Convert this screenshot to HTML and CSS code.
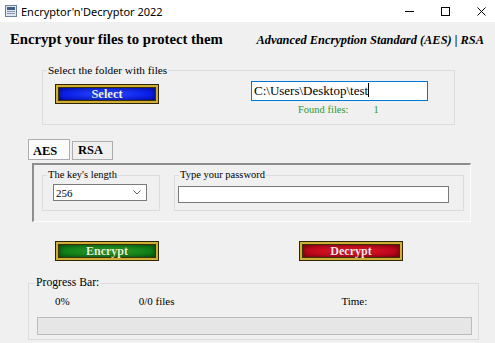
FILE: index.html
```html
<!DOCTYPE html>
<html lang="en">
<head>
    <meta charset="UTF-8">
    <title>Encryptor'n'Decryptor 2022</title>
    <link rel="stylesheet" href="styles.css">
</head>
<body>
<div class="titlebar">
    <svg class="app-icon" width="12" height="12" viewBox="0 0 12 12">
        <rect x="0.5" y="0.5" width="11" height="11" fill="#dfe6ee" stroke="#6b7f96"/>
        <rect x="2" y="2" width="8" height="3" fill="#3d5f8a"/>
        <rect x="2" y="6" width="8" height="1" fill="#8a9bb0"/>
        <rect x="2" y="8" width="8" height="1" fill="#8a9bb0"/>
    </svg>
    <span class="title">Encryptor'n'Decryptor 2022</span>
    <div class="controls">
        <span class="ctl">
            <svg width="9" height="9" viewBox="0 0 9 9"><path d="M0 4.5h9" stroke="#000" stroke-width="1"/></svg>
        </span>
        <span class="ctl">
            <svg width="9" height="9" viewBox="0 0 9 9"><rect x="0.5" y="0.5" width="8" height="8" fill="none" stroke="#000"/></svg>
        </span>
        <span class="ctl">
            <svg width="9" height="9" viewBox="0 0 9 9"><path d="M0.5 0.5l8 8M8.5 0.5l-8 8" stroke="#000" stroke-width="1"/></svg>
        </span>
    </div>
</div>

<div class="content">
    <div class="header">
        <h1>Encrypt your files to protect them</h1>
        <span class="subtitle">Advanced Encryption Standard (AES) | RSA</span>
    </div>

    <fieldset class="group folder">
        <legend>Select the folder with files</legend>
        <div class="folder-row">
            <button class="gold-btn blue select-btn">Select</button>
            <div class="path-col">
                <div class="path">C:\Users\Desktop\test<span class="caret"></span></div>
                <div class="found"><span>Found files:</span><span class="count">1</span></div>
            </div>
        </div>
    </fieldset>

    <div class="tabs">
        <div class="tab active">AES</div>
        <div class="tab">RSA</div>
    </div>
    <div class="tab-page">
        <fieldset class="group keylen">
            <legend>The key's length</legend>
            <div class="combo">
                <span>256</span>
                <svg width="8" height="5" viewBox="0 0 8 5"><path d="M0.5 0.5l3.5 3.5 3.5-3.5" fill="none" stroke="#606060"/></svg>
            </div>
        </fieldset>
        <fieldset class="group pass">
            <legend>Type your password</legend>
            <div class="pass-input"></div>
        </fieldset>
    </div>

    <div class="actions">
        <button class="gold-btn green">Encrypt</button>
        <button class="gold-btn red">Decrypt</button>
    </div>

    <fieldset class="group progress">
        <legend>Progress Bar:</legend>
        <div class="stats">
            <span class="percent">0%</span>
            <span class="files">0/0 files</span>
            <span class="time">Time:</span>
        </div>
        <div class="bar"></div>
    </fieldset>
</div>
</body>
</html>
```

FILE: styles.css
```css
body {
    margin: 0;
    background: #f0f0f0;
    font-family: "Liberation Serif", serif;
    color: #000;
    overflow: hidden;
}

.titlebar {
    display: flex;
    align-items: center;
    height: 22px;
    background: #fff;
    font-family: "Noto Sans", sans-serif;
    font-size: 11px;
}

.app-icon {
    margin-left: 5px;
    margin-right: 4px;
}

.controls {
    display: flex;
    margin-left: auto;
    margin-right: -4px;
}

.ctl {
    display: flex;
    justify-content: center;
    align-items: center;
    width: 36px;
    height: 22px;
}

.content {
    padding-top: 7px;
}

.header {
    display: flex;
    align-items: baseline;
    justify-content: space-between;
    padding: 0 11px 0 10px;
}

h1 {
    margin: 0;
    font-size: 14.7px;
    line-height: 20px;
    font-weight: bold;
}

.subtitle {
    font-size: 12.4px;
    font-weight: bold;
    font-style: italic;
}

.group {
    box-sizing: border-box;
    margin: 0;
    padding: 0;
    border: 1px solid #dcdcdc;
    min-width: 0;
}

.group legend {
    padding: 0 1px;
    margin-left: 4px;
    font-size: 11.3px;
    line-height: 14px;
}

.folder {
    width: 413px;
    height: 62px;
    margin: 14px 0 0 42px;
}

.folder-row {
    display: flex;
    align-items: flex-start;
    padding-top: 4px;
}

.select-btn {
    margin: 3px 0 0 12px;
    width: 103px;
}

.path-col {
    margin-left: 92px;
}

.path {
    box-sizing: border-box;
    width: 177px;
    height: 20px;
    border: 1px solid #0078d7;
    background: #fff;
    font-size: 13px;
    line-height: 18px;
    padding-left: 2px;
}

.caret {
    display: inline-block;
    width: 1px;
    height: 14px;
    background: #000;
    vertical-align: -2px;
}

.found {
    display: flex;
    margin: 3px 0 0 47px;
    font-size: 10.5px;
    color: #2e9a2e;
}

.found .count {
    margin-left: 25px;
}

.tabs {
    display: flex;
    align-items: flex-end;
    gap: 2px;
    margin: 14px 0 0 28px;
}

.tab {
    box-sizing: border-box;
    height: 19px;
    width: 41px;
    border: 1px solid #adadad;
    background: #f0f0f0;
    font-size: 12.5px;
    font-weight: bold;
    padding-left: 5px;
    line-height: 17px;
}

.tab.active {
    height: 21px;
    width: 42px;
    background: #fbfbfb;
    padding-top: 3px;
    padding-left: 4px;
}

.tab-page {
    box-sizing: border-box;
    display: flex;
    width: 439px;
    height: 59px;
    margin: 3px 0 0 32px;
    border-top: 2px solid #8e8e8e;
    border-left: 2px solid #8e8e8e;
    border-right: 1px solid #fcfcfc;
    border-bottom: 1px solid #fcfcfc;
    padding: 3px 0 0 8px;
}

.tab-page legend {
    font-size: 10.5px;
}

.keylen {
    width: 118px;
    height: 43px;
}

.combo {
    box-sizing: border-box;
    display: flex;
    align-items: center;
    justify-content: space-between;
    width: 94px;
    height: 17px;
    margin: 2px 0 0 10px;
    border: 1px solid #7a7a7a;
    background: #fff;
    font-size: 11px;
    padding: 0 5px 0 2px;
}

.pass {
    width: 290px;
    height: 43px;
    margin-left: 14px;
}

.pass-input {
    box-sizing: border-box;
    width: 271px;
    height: 17px;
    margin: 4px 0 0 3px;
    border: 1px solid #7a7a7a;
    background: #fff;
}

.actions {
    display: flex;
    margin: 19px 0 0 55px;
    gap: 140px;
}

.gold-btn {
    box-sizing: border-box;
    width: 104px;
    height: 20px;
    padding: 0;
    border: 1px solid #2e2600;
    box-shadow: inset 0 0 0 2px #cfae35, inset 0 0 0 3px #3c3000, inset 0 0 5px 3px rgba(0, 0, 0, 0.45);
    font-family: "Liberation Serif", serif;
    font-size: 12px;
    font-weight: bold;
    line-height: 16px;
    text-shadow: 0 0 1px rgba(0, 0, 0, 0.6);
}

.select-btn {
    font-size: 12.5px;
}

.blue {
    background: radial-gradient(ellipse at center, #2d4cff 0%, #0d22ec 55%, #0000b4 100%);
    color: #eef0ff;
}

.green {
    background: radial-gradient(ellipse at center, #2ea02a 0%, #13841a 55%, #045a08 100%);
    color: #e7f3d4;
}

.red {
    background: radial-gradient(ellipse at center, #e21d2e 0%, #c3081c 55%, #84000e 100%);
    color: #ffe6ee;
}

.progress {
    width: 451px;
    height: 64px;
    margin: 15px 0 0 28px;
}

.progress legend {
    margin-left: 6px;
    font-size: 11.7px;
}

.stats {
    display: flex;
    font-size: 11px;
    line-height: 15px;
    padding-top: 4px;
}

.percent {
    margin-left: 26px;
}

.files {
    margin-left: 69px;
}

.time {
    margin-left: 167px;
}

.bar {
    box-sizing: border-box;
    width: 435px;
    height: 18px;
    margin: 8px 0 0 8px;
    border: 1px solid #bcbcbc;
    background: #e6e6e6;
}
```
